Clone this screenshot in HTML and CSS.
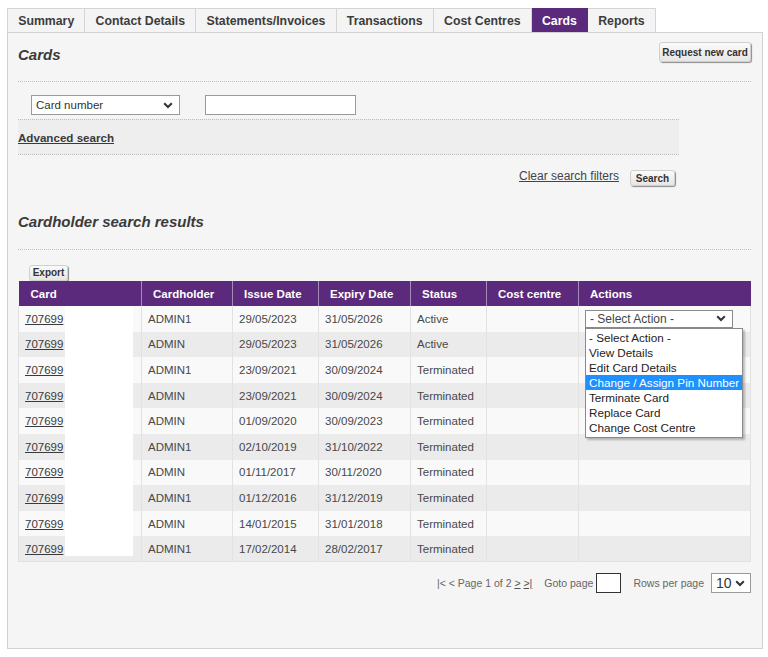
FILE: index.html
```html
<!DOCTYPE html>
<html>
<head>
<meta charset="utf-8">
<link rel="stylesheet" href="styles.css">
</head>
<body>
<div class="page">
  <ul class="tabs">
    <li>Summary</li>
    <li>Contact Details</li>
    <li>Statements/Invoices</li>
    <li>Transactions</li>
    <li>Cost Centres</li>
    <li class="active">Cards</li>
    <li>Reports</li>
  </ul>
  <div class="panel">
    <div class="head">
      <h2 class="title">Cards</h2>
      <button class="btn btn-req">Request new card</button>
    </div>
    <div class="search-row">
      <div class="fsel fsel-card"><span>Card number</span><svg class="chev" width="10" height="7" viewBox="0 0 10 7"><path d="M1.2 1.2 L5 5 L8.8 1.2" fill="none" stroke="#333" stroke-width="2"/></svg></div>
      <div class="finput"></div>
    </div>
    <div class="adv"><a class="adv-link">Advanced search</a></div>
    <div class="actions-row">
      <a class="clear">Clear search filters</a>
      <button class="btn btn-search">Search</button>
    </div>
    <h2 class="title results">Cardholder search results</h2>
    <div class="export-row"><button class="btn btn-export">Export</button></div>
    <div class="tablewrap">
      <table class="grid">
        <thead>
          <tr>
            <th class="c1">Card</th>
            <th class="c2">Cardholder</th>
            <th class="c3">Issue Date</th>
            <th class="c4">Expiry Date</th>
            <th class="c5">Status</th>
            <th class="c6">Cost centre</th>
            <th class="c7">Actions</th>
          </tr>
        </thead>
        <tbody>
          <tr>
            <td><a class="card">707699</a></td><td>ADMIN1</td><td>29/05/2023</td><td>31/05/2026</td><td>Active</td><td></td>
            <td>
              <div class="dd">
                <div class="fsel fsel-act"><span>- Select Action -</span><svg class="chev" width="10" height="7" viewBox="0 0 10 7"><path d="M1.2 1.2 L5 5 L8.8 1.2" fill="none" stroke="#333" stroke-width="2"/></svg></div>
                <ul class="ddlist">
                  <li>- Select Action -</li>
                  <li>View Details</li>
                  <li>Edit Card Details</li>
                  <li class="sel">Change / Assign Pin Number</li>
                  <li>Terminate Card</li>
                  <li>Replace Card</li>
                  <li>Change Cost Centre</li>
                </ul>
              </div>
            </td>
          </tr>
          <tr><td><a class="card">707699</a></td><td>ADMIN</td><td>29/05/2023</td><td>31/05/2026</td><td>Active</td><td></td><td></td></tr>
          <tr><td><a class="card">707699</a></td><td>ADMIN1</td><td>23/09/2021</td><td>30/09/2024</td><td>Terminated</td><td></td><td></td></tr>
          <tr><td><a class="card">707699</a></td><td>ADMIN</td><td>23/09/2021</td><td>30/09/2024</td><td>Terminated</td><td></td><td></td></tr>
          <tr><td><a class="card">707699</a></td><td>ADMIN</td><td>01/09/2020</td><td>30/09/2023</td><td>Terminated</td><td></td><td></td></tr>
          <tr><td><a class="card">707699</a></td><td>ADMIN1</td><td>02/10/2019</td><td>31/10/2022</td><td>Terminated</td><td></td><td></td></tr>
          <tr><td><a class="card">707699</a></td><td>ADMIN</td><td>01/11/2017</td><td>30/11/2020</td><td>Terminated</td><td></td><td></td></tr>
          <tr><td><a class="card">707699</a></td><td>ADMIN1</td><td>01/12/2016</td><td>31/12/2019</td><td>Terminated</td><td></td><td></td></tr>
          <tr><td><a class="card">707699</a></td><td>ADMIN</td><td>14/01/2015</td><td>31/01/2018</td><td>Terminated</td><td></td><td></td></tr>
          <tr><td><a class="card">707699</a></td><td>ADMIN1</td><td>17/02/2014</td><td>28/02/2017</td><td>Terminated</td><td></td><td></td></tr>
        </tbody>
      </table>
      <div class="redact"></div>
    </div>
    <div class="pager">
      <span class="pg">|&lt; &lt; Page 1 of 2 <a>&gt;</a> <a>&gt;|</a></span>
      <span class="goto">Goto page</span>
      <div class="pbox"></div>
      <span class="rpp">Rows per page</span>
      <div class="fsel fsel-rows"><span>10</span><svg class="chev" width="10" height="7" viewBox="0 0 10 7"><path d="M1.2 1.2 L5 5 L8.8 1.2" fill="none" stroke="#333" stroke-width="2"/></svg></div>
    </div>
  </div>
</div>
</body>
</html>
```

FILE: styles.css
```css
* { box-sizing: border-box; }
html, body { margin: 0; padding: 0; background: #fff; }
body { font-family: "Liberation Sans", Arial, sans-serif; color: #444; }

.page { width: 768px; height: 657px; padding-top: 8px; }

.tabs {
  list-style: none;
  margin: 0 0 0 7px;
  padding: 0;
  display: flex;
  height: 24px;
}
.tabs li {
  height: 24px;
  line-height: 24px;
  padding: 0 10.2px;
  font-size: 12.3px;
  font-weight: bold;
  color: #3c3c3c;
  background: #f4f4f4;
  border: 1px solid #d4d4d4;
  border-bottom: none;
  border-left: none;
}
.tabs li:first-child { border-left: 1px solid #d4d4d4; }
.tabs li.active { background: #5c2a7c; color: #fff; border-color: #5c2a7c; }

.panel {
  margin-left: 7px;
  width: 756px;
  height: 617px;
  border: 1px solid #d2d2d2;
  background: #f5f5f5;
  padding: 0 11px 0 10px;
}

.head {
  height: 49px;
  display: flex;
  justify-content: space-between;
  align-items: flex-start;
  border-bottom: 1px dotted #bdbdbd;
}
.title {
  margin: 13px 0 0 0;
  font-size: 15px;
  line-height: 18px;
  font-weight: bold;
  font-style: italic;
  color: #3a3a3a;
}

.btn {
  font-family: "Liberation Sans", Arial, sans-serif;
  font-size: 10px;
  font-weight: bold;
  color: #333;
  background: linear-gradient(#fbfbfb, #e6e6e6);
  border: 1px solid #cfcfcf;
  border-radius: 3px;
  box-shadow: 1px 1px 1px #8c8c8c;
  padding: 0;
  margin: 0;
  white-space: nowrap;
  cursor: pointer;
}
.btn-req { margin-top: 9px; height: 20px; width: 92px; }
.btn-search { height: 16px; width: 45px; }
.btn-export { height: 16px; width: 39px; margin-left: 11px; }

.search-row {
  display: flex;
  gap: 25px;
  padding: 13px 0 3px 13px;
  height: 37px;
}
.fsel {
  display: flex;
  align-items: center;
  justify-content: space-between;
  background: #fff;
  border: 1px solid #9a9a9a;
  font-size: 11.5px;
  color: #333;
  padding: 0 6px 0 4px;
}
.fsel-card { width: 149px; height: 20px; }
.finput { width: 151px; height: 20px; background: #fff; border: 1px solid #9a9a9a; }

.adv {
  width: 661px;
  height: 36px;
  background: #eeeeee;
  border-top: 1px dotted #bdbdbd;
  border-bottom: 1px dotted #bdbdbd;
  display: flex;
  align-items: center;
}
.adv-link {
  font-size: 11.6px;
  font-weight: bold;
  color: #3a3a3a;
  text-decoration: underline;
}

.actions-row {
  width: 661px;
  display: flex;
  justify-content: flex-end;
  align-items: center;
  gap: 11px;
  padding-right: 4px;
  margin-top: 15px;
  height: 16px;
}
.clear {
  font-size: 12px;
  color: #444;
  text-decoration: underline;
  position: relative;
  top: -2px;
}

.results { margin-top: 27px; }

.export-row {
  margin-top: 18px;
  border-top: 1px dotted #bdbdbd;
  padding-top: 12px;
  height: 32px;
}

.tablewrap { position: relative; width: 732px; }
.grid {
  width: 732px;
  border-collapse: collapse;
  table-layout: fixed;
  font-size: 11.5px;
}
.grid th {
  background: #5c2a7c;
  color: #fff;
  font-weight: bold;
  text-align: left;
  height: 25px;
  padding: 0 0 0 11px;
  border-left: 1px solid #a58cb6;
}
.grid th.c1 { border-left: none; padding-left: 12px; }
.c1 { width: 123px; }
.c2 { width: 91px; }
.c3 { width: 86px; }
.c4 { width: 92px; }
.c5 { width: 76px; }
.c6 { width: 92px; }
.c7 { width: 172px; }
.grid td {
  height: 25.6px;
  padding: 0 0 0 6px;
  border: 1px solid #e2e2e2;
  border-top: none;
  border-bottom: none;
  color: #484848;
  white-space: nowrap;
}
.grid tbody tr:nth-child(odd) td { background: #f9f9f9; }
.grid tbody tr:nth-child(even) td { background: #ebebeb; }
.grid tbody tr:last-child td { border-bottom: 1px solid #e2e2e2; }
.card { color: #3a3a3a; text-decoration: underline; }

.redact {
  position: absolute;
  left: 47px;
  top: 25px;
  width: 68px;
  height: 250px;
  background: #fff;
}

.dd { position: relative; width: 148px; }
.fsel-act { width: 148px; height: 18px; font-size: 12px; border-color: #8a8a8a; color: #444; }
.ddlist {
  position: absolute;
  z-index: 5;
  left: 0;
  top: 18px;
  width: 158px;
  margin: 0;
  padding: 1px 0 2px 0;
  list-style: none;
  background: #fff;
  border: 1px solid #8a8a8a;
  box-shadow: 2px 2px 2px rgba(0,0,0,0.25);
}
.ddlist li {
  height: 15px;
  line-height: 15px;
  font-size: 11.7px;
  color: #222;
  padding-left: 3px;
  white-space: nowrap;
  overflow: hidden;
}
.ddlist li.sel { background: #1e90ff; color: #fff; }

.pager {
  display: flex;
  justify-content: flex-end;
  align-items: center;
  margin-top: 11px;
  height: 20px;
  font-size: 10.5px;
  color: #666;
}
.pg a { color: #555; text-decoration: underline; }
.goto { margin-left: 12px; }
.pbox {
  width: 25px;
  height: 20px;
  background: #fff;
  border: 1px solid #333;
  margin-left: 3px;
}
.rpp { margin-left: 12px; }
.fsel-rows {
  width: 40px;
  height: 20px;
  margin-left: 7px;
  font-size: 14px;
  border-color: #9a9a9a;
  padding: 0 5px 0 4px;
}
```
